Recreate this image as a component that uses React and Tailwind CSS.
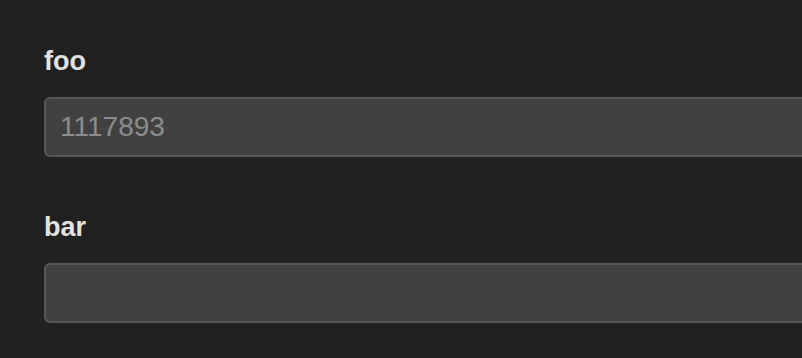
import React from 'react';

export default function App() {
  const campos = [
    { id: 'foo', label: 'foo', placeholder: '1117893' },
    { id: 'bar', label: 'bar', placeholder: '' },
  ];

  return (
    <div className="h-[358px] w-[802px] overflow-hidden bg-[#212121] pl-[44px] pt-[45px]" style={{ fontFamily: '"Liberation Sans", Arial, sans-serif' }}>
      <div className="flex w-[900px] flex-col gap-[54px]">
        {campos.map(c => (
          <div key={c.id} className="flex flex-col">
            <label htmlFor={c.id} className="mb-[20px] block text-[27px] font-bold leading-[32px] text-[#e2e2e2]">{c.label}</label>
            <input
              id={c.id}
              type="text"
              placeholder={c.placeholder}
              className="h-[60px] w-full rounded-[6px] border-2 border-[#565656] bg-[#414141] px-[14px] text-[28px] text-[#e2e2e2] outline-none placeholder:text-[#8c8c8c]"
            />
          </div>
        ))}
      </div>
    </div>
  );
}
